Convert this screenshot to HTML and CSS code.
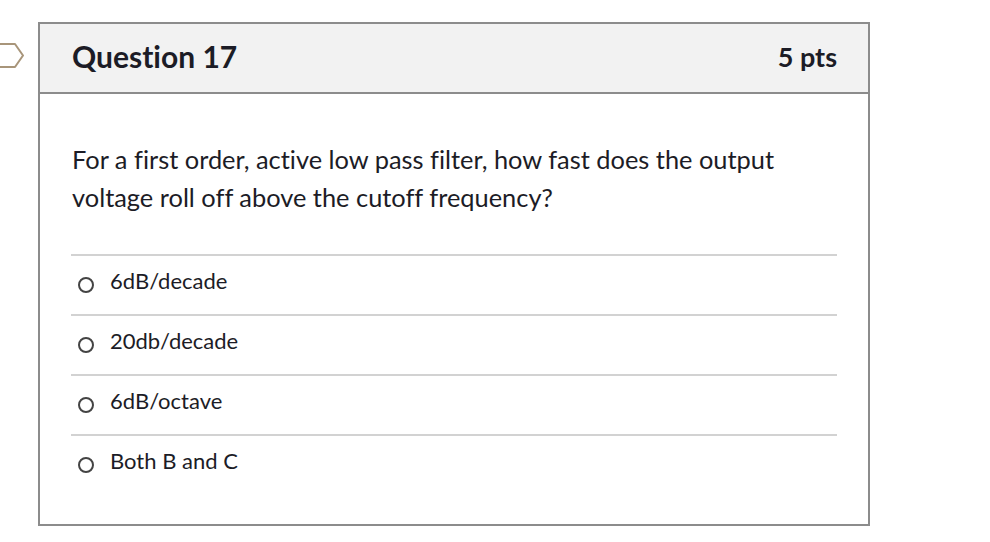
FILE: index.html
```html
<!DOCTYPE html>
<html>
<head>
<meta charset="utf-8">
<link rel="stylesheet" href="styles.css">
</head>
<body>
<div class="page">
  <svg class="flag" width="38" height="40" viewBox="0 0 38 40">
    <path d="M-3 3 H15 L23 14.5 L15 26 H-3" fill="#fff" stroke="#a8957a" stroke-width="2" stroke-linejoin="round"/>
  </svg>
  <div class="card">
    <div class="header">
      <span class="title">Question 17</span>
      <span class="pts">5 pts</span>
    </div>
    <div class="body">
      <p class="question">For a first order, active low pass filter, how fast does the output voltage roll off above the cutoff frequency?</p>
      <div class="answers">
        <div class="answer"><span class="radio"></span><span class="label">6dB/decade</span></div>
        <div class="answer"><span class="radio"></span><span class="label">20db/decade</span></div>
        <div class="answer"><span class="radio"></span><span class="label">6dB/octave</span></div>
        <div class="answer"><span class="radio"></span><span class="label">Both B and C</span></div>
      </div>
    </div>
  </div>
</div>
</body>
</html>
```
FILE: styles.css
```css
html, body {
  margin: 0;
  padding: 0;
  background: #fff;
}
body {
  font-family: Lato, "Open Sans", sans-serif;
  color: #1c1c26;
  font-variant-ligatures: none;
}
.page {
  display: flex;
  align-items: flex-start;
  padding-top: 22px;
}
.flag {
  flex: 0 0 38px;
  margin-top: 19px;
}
.card {
  width: 828px;
  border: 2px solid #8c8c8c;
}
.header {
  display: flex;
  justify-content: space-between;
  align-items: center;
  height: 68px;
  padding: 0 31px 0 32px;
  background: #f2f2f2;
  border-bottom: 2px solid #8c8c8c;
}
.title {
  font-size: 30px;
  font-weight: 700;
  padding-bottom: 4px;
}
.pts {
  font-size: 27px;
  font-weight: 700;
  padding-bottom: 4px;
}
.body {
  padding: 46px 31px 30px 31px;
}
.question {
  margin: 0 0 38px 1px;
  font-size: 25.4px;
  line-height: 38px;
}
.answer {
  display: flex;
  align-items: flex-start;
  gap: 16px;
  height: 58px;
  padding-left: 7px;
  border-top: 2px solid #d2d2d2;
  font-size: 22px;
  line-height: 26px;
}
.radio {
  flex: 0 0 auto;
  width: 12px;
  height: 12px;
  border: 2px solid #444;
  border-radius: 50%;
  margin-top: 21px;
}
.label {
  margin-top: 12px;
}
```
